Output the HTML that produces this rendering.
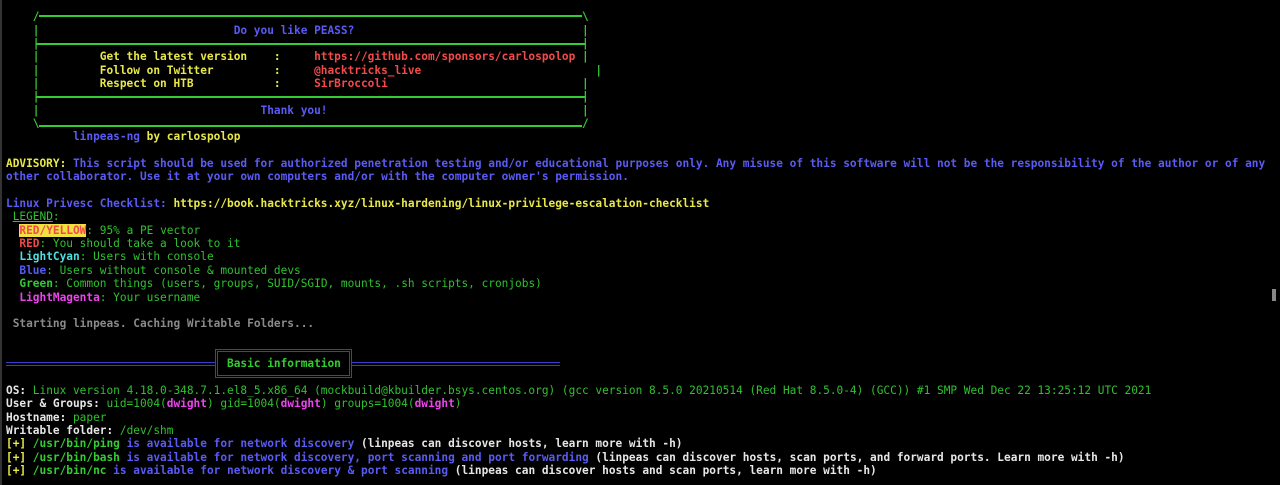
<!DOCTYPE html>
<html><head><meta charset="utf-8"><style>
html,body{margin:0;padding:0;background:#000;width:1280px;height:485px;overflow:hidden}
#t{position:absolute;left:6px;top:10.3px;font-family:"DejaVu Sans Mono","Liberation Mono",monospace;font-size:11.13px;line-height:13.35px;color:#ddd;font-weight:bold}
.r{position:relative;height:13.35px;white-space:pre}
.a{position:absolute;top:0}
.g{color:#3c3}.y{color:#e8e84a}.b{color:#5a5af5}.rd{color:#f24a4a}.w{color:#e6e6e6}
.gn{color:#2fc12f;font-weight:normal}.c{color:#50dede}.m{color:#ee44ee}.gr{color:#8a8a8a}
.hl{position:absolute;height:2px;background:#3c3;top:6px}
</style></head><body>
<div style="position:absolute;left:0;top:0;width:2px;height:485px;background:#333"></div>
<div style="position:absolute;left:1272px;top:289px;width:4px;height:12px;background:#888"></div>
<div id="t">
<div class="r g"><span class="a" style="left:4ch">/</span><div class="hl" style="left:5ch;width:81ch;top:5px"></div><span class="a" style="left:86ch">\</span></div>
<div class="r"><span class="a g" style="left:4ch">|</span><span class="a b" style="left:34ch">Do you like PEASS?</span><span class="a g" style="left:86ch">|</span></div>
<div class="r"><span class="a g" style="left:4ch">|</span><div class="hl" style="left:4.5ch;width:82ch"></div><span class="a g" style="left:86ch">|</span></div>
<div class="r"><span class="a g" style="left:4ch">|</span><span class="a y" style="left:14ch">Get the latest version</span><span class="a y" style="left:40ch">:</span><span class="a rd" style="left:46ch">https://github.com/sponsors/carlospolop</span><span class="a g" style="left:86ch">|</span></div>
<div class="r"><span class="a g" style="left:4ch">|</span><span class="a y" style="left:14ch">Follow on Twitter</span><span class="a y" style="left:40ch">:</span><span class="a rd" style="left:46ch">@hacktricks_live</span><span class="a g" style="left:88ch">|</span></div>
<div class="r"><span class="a g" style="left:4ch">|</span><span class="a y" style="left:14ch">Respect on HTB</span><span class="a y" style="left:40ch">:</span><span class="a rd" style="left:46ch">SirBroccoli</span><span class="a g" style="left:86ch">|</span></div>
<div class="r"><span class="a g" style="left:4ch">|</span><div class="hl" style="left:4.5ch;width:82ch"></div><span class="a g" style="left:86ch">|</span></div>
<div class="r"><span class="a g" style="left:4ch">|</span><span class="a b" style="left:38ch">Thank you!</span><span class="a g" style="left:86ch">|</span></div>
<div class="r g"><span class="a" style="left:4ch">\</span><div class="hl" style="left:5ch;width:81ch;top:8px"></div><span class="a" style="left:86ch">/</span></div>
<div class="r">          <span class="b">linpeas-ng</span><span class="y"> by carlospolop</span></div>
<div class="r"> </div>
<div class="r"><span class="y">ADVISORY:</span><span class="b"> This script should be used for authorized penetration testing and/or educational purposes only. Any misuse of this software will not be the responsibility of the author or of any</span></div>
<div class="r b">other collaborator. Use it at your own computers and/or with the computer owner's permission.</div>
<div class="r"> </div>
<div class="r"><span class="b">Linux Privesc Checklist: </span><span class="y">https://book.hacktricks.xyz/linux-hardening/linux-privilege-escalation-checklist</span></div>
<div class="r"> <span class="gn" style="text-decoration:underline">LEGEND</span><span class="gn">:</span></div>
<div class="r">  <span class="rd" style="background:#f0e040">RED/YELLOW</span><span class="gn">: 95% a PE vector</span></div>
<div class="r">  <span class="rd">RED</span><span class="gn">: You should take a look to it</span></div>
<div class="r">  <span class="c">LightCyan</span><span class="gn">: Users with console</span></div>
<div class="r">  <span class="b">Blue</span><span class="gn">: Users without console &amp; mounted devs</span></div>
<div class="r">  <span class="g">Green</span><span class="gn">: Common things (users, groups, SUID/SGID, mounts, .sh scripts, cronjobs)</span></div>
<div class="r">  <span class="m">LightMagenta</span><span class="gn">: Your username</span></div>
<div class="r"> </div>
<div class="r gr"> Starting linpeas. Caching Writable Folders...</div>
<div class="r"> </div>
<div class="r"> </div>
<div class="r">
<div style="position:absolute;left:0;top:5px;width:209px;height:1px;background:#3a3acc"></div>
<div style="position:absolute;left:0;top:8px;width:209px;height:1px;background:#3a3acc"></div>
<div style="position:absolute;left:209px;top:-8px;width:131px;height:23px;border:3px double #3a3acc"></div>
<span class="a g" style="left:33ch">Basic information</span>
<div style="position:absolute;left:346px;top:5px;width:208px;height:1px;background:#3a3acc"></div>
<div style="position:absolute;left:346px;top:8px;width:208px;height:1px;background:#3a3acc"></div>
</div>
<div class="r"> </div>
<div class="r"><span class="w">OS: </span><span class="gn">Linux version 4.18.0-348.7.1.el8_5.x86_64 (mockbuild@kbuilder.bsys.centos.org) (gcc version 8.5.0 20210514 (Red Hat 8.5.0-4) (GCC)) #1 SMP Wed Dec 22 13:25:12 UTC 2021</span></div>
<div class="r"><span class="w">User &amp; Groups: </span><span class="gn">uid=1004(</span><span class="m">dwight</span><span class="gn">) gid=1004(</span><span class="m">dwight</span><span class="gn">) groups=1004(</span><span class="m">dwight</span><span class="gn">)</span></div>
<div class="r"><span class="w">Hostname: </span><span class="gn">paper</span></div>
<div class="r"><span class="w">Writable folder: </span><span class="gn">/dev/shm</span></div>
<div class="r"><span class="y">[+] </span><span class="g">/usr/bin/ping</span><span class="b"> is available for network discovery</span><span class="w"> (linpeas can discover hosts, learn more with -h)</span></div>
<div class="r"><span class="y">[+] </span><span class="g">/usr/bin/bash</span><span class="b"> is available for network discovery, port scanning and port forwarding</span><span class="w"> (linpeas can discover hosts, scan ports, and forward ports. Learn more with -h)</span></div>
<div class="r"><span class="y">[+] </span><span class="g">/usr/bin/nc</span><span class="b"> is available for network discovery &amp; port scanning</span><span class="w"> (linpeas can discover hosts and scan ports, learn more with -h)</span></div>
</div>
</body></html>
